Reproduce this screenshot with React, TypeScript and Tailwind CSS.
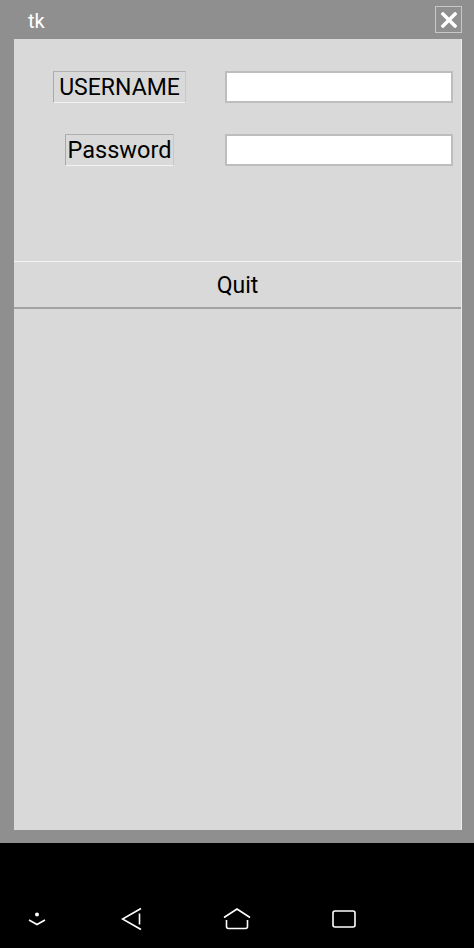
import React from 'react';

const font = { fontFamily: 'Roboto, "Noto Sans", sans-serif' };

export default function App() {
  return (
    <div className="flex h-[948px] w-[474px] flex-col bg-black" style={font}>
      {/* Window */}
      <div className="flex h-[843px] flex-col bg-[#8f8f8f]">
        {/* Title bar */}
        <div className="relative flex h-[39px] items-center">
          <span className="ml-[28px] pt-[2px] text-[20px] leading-none text-white">tk</span>
          <div className="absolute left-[435px] top-[6px] flex h-[27px] w-[27px] items-center justify-center border border-[#c8c8c8]">
            <svg width="16" height="16" viewBox="0 0 16 16">
              <path d="M2 2L14 14M14 2L2 14" stroke="white" strokeWidth="3.4" strokeLinecap="square" />
            </svg>
          </div>
        </div>

        {/* Content */}
        <div className="ml-[14px] mr-[12px] flex h-[791px] flex-col border-r border-[#ececec] bg-[#d9d9d9] pt-[32px]">
          <div className="flex h-[32px] items-center">
            <div className="flex w-[211px] justify-center">
              <span className="flex h-[32px] items-center border border-b-[#f2f2f2] border-l-[#a9a9a9] border-r-[#c8c8c8] border-t-[#b0b0b0] px-[5px] pt-[2px] text-[23px] text-black">
                USERNAME
              </span>
            </div>
            <div className="h-[32px] w-[228px] border-2 border-[#bdbdbd] bg-white" />
          </div>
          <div className="mt-[31px] flex h-[32px] items-center">
            <div className="flex w-[211px] justify-center">
              <span className="flex h-[32px] items-center border border-b-[#f2f2f2] border-l-[#a9a9a9] border-r-[#c8c8c8] border-t-[#b0b0b0] px-[2px] pt-[2px] text-[23.5px] text-black">
                Password
              </span>
            </div>
            <div className="h-[32px] w-[228px] border-2 border-[#bdbdbd] bg-white" />
          </div>

          <div className="mt-[95px] flex h-[48px] items-center justify-center border-b-2 border-t border-b-[#a3a3a3] border-t-[#f4f4f4] pt-[3px] text-[23px] text-black">
            Quit
          </div>
        </div>
      </div>

      {/* Android nav bar */}
      <div className="flex flex-1 items-end pb-[17px]">
        <div className="flex h-[24px] w-full items-center">
          <svg className="ml-[27px]" width="20" height="14" viewBox="0 0 20 14">
            <circle cx="10" cy="2.5" r="2" fill="white" />
            <path d="M2 8L10 12.5L18 8" stroke="white" strokeWidth="1.6" fill="none" />
          </svg>
          <svg className="ml-[74px]" width="22" height="24" viewBox="0 0 22 24">
            <path d="M20 1.5L1.5 12L20 22.5" stroke="white" strokeWidth="1.6" fill="none" strokeLinejoin="miter" />
            <path d="M18.5 6.5V17.5" stroke="white" strokeWidth="1.6" />
          </svg>
          <svg className="ml-[80px]" width="28" height="24" viewBox="0 0 28 24">
            <path d="M1 10.5L14 2L27 10.5" stroke="white" strokeWidth="1.6" fill="none" />
            <path d="M3.5 13V19.5Q3.5 21.5 5.5 21.5H22.5Q24.5 21.5 24.5 19.5V13" stroke="white" strokeWidth="1.6" fill="none" />
          </svg>
          <svg className="ml-[80px]" width="26" height="20" viewBox="0 0 26 20">
            <rect x="2" y="2" width="22" height="16" rx="2" stroke="white" strokeWidth="1.6" fill="none" />
          </svg>
        </div>
      </div>
    </div>
  );
}
